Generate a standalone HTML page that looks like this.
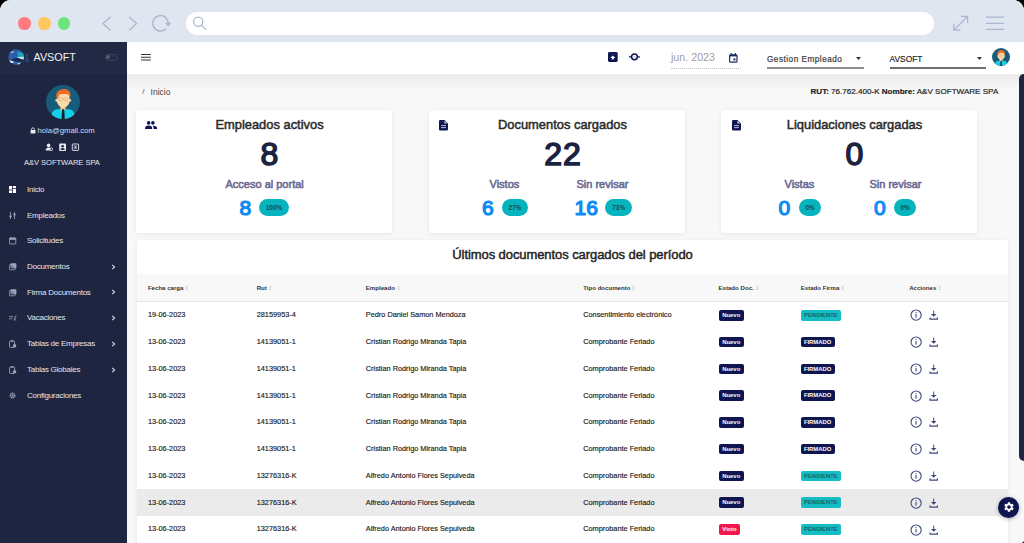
<!DOCTYPE html>
<html><head><meta charset="utf-8">
<style>
*{box-sizing:border-box;margin:0;padding:0}
html,body{width:1024px;height:543px;overflow:hidden;background:#000;font-family:"Liberation Sans",sans-serif}
#frame{position:absolute;left:0;top:0;width:1024px;height:543px;background:#f8f8f8;border-radius:11px 11px 3px 0;overflow:hidden}
.abs{position:absolute}
#chrome{position:absolute;left:0;top:0;width:1024px;height:42px;background:#e0e6f0}
.dot{position:absolute;width:12.6px;height:12.6px;border-radius:50%;top:17px}
#url{position:absolute;left:186px;top:11.5px;width:748px;height:23.5px;background:#fff;border-radius:12px}
#side{position:absolute;left:0;top:42px;width:127px;height:501px;background:#1e2541}
#sidehead{position:absolute;left:0;top:0;width:127px;height:32px;background:#222945}
#nav{position:absolute;left:127px;top:42px;width:897px;height:32px;background:#fff}
#navshadow{position:absolute;left:127px;top:74px;width:897px;height:16px;background:linear-gradient(#ebebeb,#f8f8f8)}
.menu{position:absolute;left:27px;color:#e2e4ec;font-size:8px;letter-spacing:-.25px;white-space:nowrap}
.mico{position:absolute;left:9px}
.chev{position:absolute;left:111px;width:4px;height:4px;border-right:1.2px solid #cfd3de;border-top:1.2px solid #cfd3de;transform:rotate(45deg)}
.card{position:absolute;top:110px;width:256px;height:123px;background:#fff;border-radius:3px;box-shadow:0 1px 5px rgba(0,0,0,.07)}
.ctitle{position:absolute;top:7.2px;left:0;width:100%;padding-left:11px;text-align:center;font-weight:normal;font-size:12.9px;line-height:16px;color:#2b2b2b;-webkit-text-stroke:.5px #2b2b2b;white-space:nowrap}
.cbig{position:absolute;top:25.9px;left:0;width:100%;padding-left:11px;text-align:center;font-size:32px;font-weight:normal;-webkit-text-stroke:1.5px #1b2340;color:#1b2340;line-height:36px}
.csub{position:absolute;top:68.3px;font-weight:normal;font-size:11px;line-height:12px;color:#6b6b94;-webkit-text-stroke:.6px #6b6b94;white-space:nowrap}
.cnum{position:absolute;top:86.2px;font-weight:normal;font-size:21px;-webkit-text-stroke:1.2px #0c8af6;color:#0c8af6;line-height:24px}
.badge{position:absolute;top:88.5px;height:17px;border-radius:9px;background:#07b4bd;color:#134c52;font-size:6.4px;font-weight:bold;text-align:center;line-height:17.5px}
#table{position:absolute;left:137px;top:239.5px;width:871px;height:320px;background:#fff;border-radius:3px;box-shadow:0 1px 5px rgba(0,0,0,.07)}
.th{position:absolute;top:44.8px;line-height:8px;font-size:6.1px;font-weight:bold;color:#333;white-space:nowrap}
.bdg{position:absolute;height:10.6px;border-radius:2px;font-size:5.9px;font-weight:bold;text-align:center;line-height:10.8px;white-space:nowrap}
.td{position:absolute;font-size:7.33px;color:#1a1a1a;-webkit-text-stroke:.15px #1a1a1a;line-height:10px;white-space:nowrap}
</style></head><body>
<div id="frame">
 <div id="chrome">
  <div class="dot" style="left:18.4px;background:#ff7b80"></div>
  <div class="dot" style="left:38.2px;background:#ffc75f"></div>
  <div class="dot" style="left:57.9px;background:#6ee57c"></div>
  <div id="url"></div>
  <svg class="abs" style="left:0;top:0" width="1024" height="42" viewBox="0 0 1024 42" fill="none" stroke="#a9b7d0" stroke-width="1.3" stroke-linecap="round" stroke-linejoin="round">
   <path d="M110.2 17.2 L103 23.6 L110.2 30"/>
   <path d="M129.4 17.2 L136.6 23.6 L129.4 30"/>
   <path d="M165.6 29 A7.7 7.7 0 1 1 168.1 22.6" stroke-width="1.5"/>
   <path d="M165.1 22.7 L171.3 22.7 L168.2 26.7Z" fill="#a9b7d0" stroke="none"/>
   <circle cx="198.2" cy="21.8" r="4.6"/>
   <path d="M201.6 25.4 L205.8 29.4"/>
   <path d="M953.8 30.2 L967.6 16.4 M961.6 16.4 L967.6 16.4 L967.6 22.4 M953.8 24.2 L953.8 30.2 L959.8 30.2"/>
   <path d="M986.4 17.2 H1003.6 M986.4 23.3 H1003.6 M986.4 29.4 H1003.6"/>
  </svg>
 </div>
 <div id="side"><div id="sidehead">
  <svg class="abs" style="left:8px;top:7px" width="22" height="17" viewBox="0 0 22 17">
   <defs><clipPath id="lgc"><circle cx="8.2" cy="8.1" r="7.8"/></clipPath></defs>
   <circle cx="8.2" cy="8.1" r="7.8" fill="#2b5ea6"/>
   <g clip-path="url(#lgc)">
    <path d="M9 3 Q13 2.5 16 5 L16 9 Q12 9.5 8.5 8.5 Q11 7 9 3Z" fill="#1aa6c4"/>
    <path d="M9.5 8.3 Q13 7.4 16.5 8 L16.5 11 Q12.5 11.8 9.5 8.3Z" fill="#bfe9ee"/>
    <path d="M3 11 Q7 8.5 11 9.2 Q14 10.5 16 10.5 L16 12 Q12 13.5 8 12.5 Q5 12 3 11Z" fill="#1b2a4e"/>
    <path d="M0 11.5 Q3 11 6.5 13 Q5 14.5 1 14Z" fill="#e6f3f5"/>
    <path d="M9 14.5 Q11.5 13.5 13 14 L11.5 16 Q10 16 9 14.5Z" fill="#a9dce6"/>
    <path d="M2.5 3 Q4.5 2 6.5 2.6 Q5.5 4 3 4Z" fill="#dbe9f2"/>
   </g>
   <path d="M17.5 4.5 Q20.2 4.2 20.2 6.2 Q20.2 8 18 9 L20.6 9 L20.6 13.2 L17.5 13.2Z" fill="#26467a"/>
  </svg>
  <div class="abs" style="left:33.5px;top:8px;color:#f1f2f6;font-size:10.8px;line-height:14px;letter-spacing:0">AVSOFT</div>
  <div class="abs" style="left:105px;top:12px;width:13px;height:6.5px;border-radius:4px;border:1px solid #3d4460;background:#262d48"></div>
  <div class="abs" style="left:106.2px;top:13.2px;width:4.2px;height:4.2px;border-radius:50%;background:#555b70"></div>
 </div>
 <svg class="abs" style="left:45.5px;top:43px" width="34" height="34" viewBox="0 0 34 34">
  <defs><clipPath id="avc"><circle cx="17" cy="17" r="17"/></clipPath></defs>
  <circle cx="17" cy="17" r="17" fill="#175c7a"/>
  <g clip-path="url(#avc)">
   <path d="M5.8 34 L5.8 29 Q6.2 24.8 11.5 24.2 L22.8 24.2 Q28 24.8 28.2 29 L28.2 34Z" fill="#17cfe6"/>
   <rect x="14.4" y="19" width="5.2" height="6" fill="#f4c089"/>
   <circle cx="10.9" cy="15.2" r="1.5" fill="#f8cf98"/><circle cx="23.6" cy="15.2" r="1.5" fill="#f8cf98"/>
   <path d="M11 10.5 Q11 8 13.5 8 L21 8 Q23.5 8 23.5 10.5 L23.5 16.5 Q23.5 19.2 20.8 21.4 L17.2 23 L13.8 21.4 Q11 19.2 11 16.5Z" fill="#fcd9a6"/>
   <path d="M16.2 24.2 L18.2 24.2 L18.8 34 L15.6 34Z" fill="#10232f"/>
   <path d="M10.6 13.5 Q9.6 9 11.6 6.5 Q14 3.9 18 4 Q22.6 4.3 24 7.4 Q25.1 10 24.1 12.6 Q23.4 9.6 21.2 9 L15 9 Q12.6 9.4 12.2 13.5Z" fill="#f26b22"/>
   <rect x="12.6" y="12.8" width="4.2" height="2.8" rx="1.2" fill="none" stroke="#cfae8a" stroke-width=".7"/>
   <rect x="17.8" y="12.8" width="4.2" height="2.8" rx="1.2" fill="none" stroke="#cfae8a" stroke-width=".7"/>
  </g>
 </svg>
 <svg class="abs" style="left:30.2px;top:84.6px" width="6" height="8" viewBox="0 0 6 8"><path d="M1.6 3.2 V2.2 A1.4 1.4 0 0 1 4.4 2.2 V3.2" fill="none" stroke="#e8eaf0" stroke-width=".8"/><rect x=".6" y="3" width="4.8" height="3.6" rx=".6" fill="#e8eaf0"/></svg>
 <div class="abs" style="left:37.6px;top:84.4px;color:#dcdee6;font-size:7.65px;line-height:10px">hola@gmail.com</div>
 <svg class="abs" style="left:45.3px;top:101.3px" width="36" height="9" viewBox="0 0 36 9" fill="#e8eaf0">
  <circle cx="3.6" cy="2.4" r="1.8"/><path d="M0.6 7.6 Q0.8 4.6 3.6 4.6 Q5 4.6 5.6 5.2 L5.2 7.6Z"/><circle cx="6.2" cy="6.2" r="1.4" fill="none" stroke="#e8eaf0" stroke-width=".8"/>
  <rect x="14.2" y=".4" width="6.8" height="7.6" rx=".7"/><circle cx="17.6" cy="3.2" r="1.3" fill="#1e2541"/><path d="M15.4 7 Q15.6 5 17.6 5 Q19.6 5 19.8 7Z" fill="#1e2541"/>
  <rect x="27.3" y="1" width="6.3" height="6.4" rx=".6" fill="none" stroke="#e8eaf0" stroke-width=".9"/><path d="M28.4 2.8 H32.5 M28.4 5.6 H32.5" stroke="#9da2b6" stroke-width=".6"/><path d="M29.6 2.6 L31.8 4.2 L29.6 5.8Z" fill="#e8eaf0"/>
 </svg>
 <div class="abs" style="left:24px;top:115.8px;color:#e8eaf0;font-size:7.5px;line-height:10px">A&amp;V SOFTWARE SPA</div>
<svg class="abs" style="left:9.2px;top:143.80px" width="8" height="8" viewBox="0 0 8 8"><rect x="0" y="0" width="3" height="3.6" fill="#fff"/><rect x="3.8" y="0" width="3.2" height="2.2" fill="#fff"/><rect x="0" y="4.4" width="3" height="2.6" fill="#fff"/><rect x="3.8" y="3" width="3.2" height="4" fill="#fff"/></svg>
<div class="menu" style="top:142.80px;line-height:10px">Inicio</div>
<svg class="abs" style="left:9.2px;top:169.53px" width="8" height="8" viewBox="0 0 8 8"><g stroke="#9ea3b8" stroke-width=".9" fill="none"><path d="M1.5 0 V7 M5.5 0 V7"/></g><rect x=".3" y="3.6" width="2.4" height="1.4" fill="#9ea3b8"/><rect x="4.3" y="1.8" width="2.4" height="1.4" fill="#9ea3b8"/></svg>
<div class="menu" style="top:168.53px;line-height:10px">Empleados</div>
<svg class="abs" style="left:9.2px;top:195.26px" width="8" height="8" viewBox="0 0 8 8"><rect x=".4" y="1" width="6.4" height="6" rx=".8" fill="none" stroke="#9ea3b8" stroke-width=".9"/><rect x=".4" y="1" width="6.4" height="1.8" fill="#9ea3b8"/><path d="M2 0 V1.6 M5.2 0 V1.6" stroke="#9ea3b8" stroke-width=".8"/></svg>
<div class="menu" style="top:194.26px;line-height:10px">Solicitudes</div>
<svg class="abs" style="left:9.2px;top:220.99px" width="8" height="8" viewBox="0 0 8 8"><rect x="1.6" y=".2" width="5.8" height="5" rx=".6" fill="#9ea3b8"/><rect x=".4" y="1.6" width="5.8" height="5.2" rx=".6" fill="none" stroke="#9ea3b8" stroke-width=".8"/><path d="M2 4.6 L3.4 3.4 L4.6 4.4" stroke="#1e2541" stroke-width=".7" fill="none"/></svg>
<div class="menu" style="top:219.99px;line-height:10px">Documentos</div>
<svg class="abs" style="left:111px;top:221.59px" width="5" height="6" viewBox="0 0 5 6"><path d="M1.2 .8 L3.6 3 L1.2 5.2" fill="none" stroke="#d6d9e2" stroke-width="1.1"/></svg>
<svg class="abs" style="left:9.2px;top:246.72px" width="8" height="8" viewBox="0 0 8 8"><rect x="1.6" y=".2" width="5.8" height="5" rx=".6" fill="#9ea3b8"/><rect x=".4" y="1.6" width="5.8" height="5.2" rx=".6" fill="none" stroke="#9ea3b8" stroke-width=".8"/><path d="M2 4.6 L3.4 3.4 L4.6 4.4" stroke="#1e2541" stroke-width=".7" fill="none"/></svg>
<div class="menu" style="top:245.72px;line-height:10px">Firma Documentos</div>
<svg class="abs" style="left:111px;top:247.32px" width="5" height="6" viewBox="0 0 5 6"><path d="M1.2 .8 L3.6 3 L1.2 5.2" fill="none" stroke="#d6d9e2" stroke-width="1.1"/></svg>
<svg class="abs" style="left:9.2px;top:272.45px" width="8" height="8" viewBox="0 0 8 8"><path d="M0 2.6 H4 M0 4.8 H3.2" stroke="#9ea3b8" stroke-width=".8"/><path d="M4.8 2.8 L5.8 3.8 L7.4 1.2 M4.8 4.2 L7 6.6 M7 4.2 L4.8 6.6" stroke="#9ea3b8" stroke-width=".8" fill="none"/></svg>
<div class="menu" style="top:271.45px;line-height:10px">Vacaciones</div>
<svg class="abs" style="left:111px;top:273.05px" width="5" height="6" viewBox="0 0 5 6"><path d="M1.2 .8 L3.6 3 L1.2 5.2" fill="none" stroke="#d6d9e2" stroke-width="1.1"/></svg>
<svg class="abs" style="left:9.2px;top:298.18px" width="8" height="8" viewBox="0 0 8 8"><rect x=".6" y="1" width="5" height="6.4" rx=".6" fill="none" stroke="#9ea3b8" stroke-width=".9"/><rect x="2" y=".2" width="2.2" height="1.4" fill="#9ea3b8"/><circle cx="5.6" cy="5.8" r="1.7" fill="#9ea3b8"/></svg>
<div class="menu" style="top:297.18px;line-height:10px">Tablas de Empresas</div>
<svg class="abs" style="left:111px;top:298.78px" width="5" height="6" viewBox="0 0 5 6"><path d="M1.2 .8 L3.6 3 L1.2 5.2" fill="none" stroke="#d6d9e2" stroke-width="1.1"/></svg>
<svg class="abs" style="left:9.2px;top:323.91px" width="8" height="8" viewBox="0 0 8 8"><rect x=".6" y="1" width="5" height="6.4" rx=".6" fill="none" stroke="#9ea3b8" stroke-width=".9"/><rect x="2" y=".2" width="2.2" height="1.4" fill="#9ea3b8"/><circle cx="5.6" cy="5.8" r="1.7" fill="#9ea3b8"/></svg>
<div class="menu" style="top:322.91px;line-height:10px">Tablas Globales</div>
<svg class="abs" style="left:111px;top:324.51px" width="5" height="6" viewBox="0 0 5 6"><path d="M1.2 .8 L3.6 3 L1.2 5.2" fill="none" stroke="#d6d9e2" stroke-width="1.1"/></svg>
<svg class="abs" style="left:9.2px;top:349.64px" width="8" height="8" viewBox="0 0 8 8"><circle cx="3.5" cy="3.5" r="2.2" fill="none" stroke="#9ea3b8" stroke-width="1.6" stroke-dasharray="1.2 .5"/><circle cx="3.5" cy="3.5" r="1" fill="#9ea3b8"/></svg>
<div class="menu" style="top:348.64px;line-height:10px">Configuraciones</div>
</div>
 <div id="nav">
  <svg class="abs" style="left:14px;top:12px" width="10" height="9" viewBox="0 0 10 9"><path d="M0 .5 H9.8 M0 3.3 H9.8 M0 6 H9.8" stroke="#333" stroke-width="1.05"/></svg>
  <svg class="abs" style="left:481px;top:10px" width="10" height="10" viewBox="0 0 10 10"><rect x="0" y="0" width="9.7" height="9.9" rx="1.4" fill="#0e1551"/><rect x="0" y="1.6" width="9.7" height=".5" fill="#3b4176"/><path d="M4.85 3.4 L7.4 6 L5.8 6 L5.8 7.4 L3.9 7.4 L3.9 6 L2.3 6Z" fill="#fff"/></svg>
  <svg class="abs" style="left:501.5px;top:11px" width="12" height="8" viewBox="0 0 12 8"><circle cx="5.45" cy="3.85" r="2.9" fill="none" stroke="#0e1551" stroke-width="1.5"/><path d="M0 3.85 H2.4 M8.5 3.85 H10.9" stroke="#0e1551" stroke-width="1.3"/><circle cx="5.45" cy="3.85" r="1" fill="#c8cbe0"/></svg>
  <div class="abs" style="left:544px;top:8.8px;font-size:10.7px;color:#9e9e9e;line-height:13px;white-space:nowrap">jun. 2023</div>
  <div class="abs" style="left:544px;top:25.6px;width:70px;height:0;border-top:1px dotted #c4c4c4"></div>
  <svg class="abs" style="left:601.6px;top:11px" width="9" height="10" viewBox="0 0 9 10"><rect x=".6" y="1.8" width="7.4" height="7.4" rx="1" fill="none" stroke="#1e2a62" stroke-width="1.2"/><rect x=".6" y="1.8" width="7.4" height="1.6" fill="#1e2a62"/><path d="M2.2 0 V2 M6.4 0 V2" stroke="#1e2a62" stroke-width="1.1"/><rect x="4.4" y="5.4" width="2" height="2" fill="#1e2a62"/></svg>
  <div class="abs" style="left:640px;top:12.8px;font-size:8.2px;color:#3a3a3a;-webkit-text-stroke:.2px #3a3a3a;letter-spacing:.5px;line-height:10px;white-space:nowrap">Gestion Empleado</div>
  <svg class="abs" style="left:728.6px;top:15.2px" width="6" height="4" viewBox="0 0 6 4"><path d="M0 0 H5 L2.5 3Z" fill="#333"/></svg>
  <div class="abs" style="left:640px;top:25.1px;width:96.5px;height:1.5px;background:#8f8f8f"></div>
  <div class="abs" style="left:762.5px;top:11.9px;font-size:8.4px;color:#222;-webkit-text-stroke:.15px #222;line-height:10px;white-space:nowrap">AVSOFT</div>
  <svg class="abs" style="left:850px;top:15.2px" width="6" height="4" viewBox="0 0 6 4"><path d="M0 0 H5 L2.5 3Z" fill="#333"/></svg>
  <div class="abs" style="left:762.5px;top:25.1px;width:96.5px;height:1.5px;background:#6f6f6f"></div>
  <svg class="abs" style="left:865px;top:6.3px" width="18" height="18" viewBox="0 0 34 34">
   <defs><clipPath id="avc2"><circle cx="17" cy="17" r="17"/></clipPath></defs>
   <circle cx="17" cy="17" r="17" fill="#175c7a"/>
   <g clip-path="url(#avc2)">
   <path d="M5.8 34 L5.8 29 Q6.2 24.8 11.5 24.2 L22.8 24.2 Q28 24.8 28.2 29 L28.2 34Z" fill="#17cfe6"/>
   <rect x="14.4" y="19" width="5.2" height="6" fill="#f4c089"/>
   <circle cx="10.9" cy="15.2" r="1.5" fill="#f8cf98"/><circle cx="23.6" cy="15.2" r="1.5" fill="#f8cf98"/>
   <path d="M11 10.5 Q11 8 13.5 8 L21 8 Q23.5 8 23.5 10.5 L23.5 16.5 Q23.5 19.2 20.8 21.4 L17.2 23 L13.8 21.4 Q11 19.2 11 16.5Z" fill="#fcd9a6"/>
   <path d="M16.2 24.2 L18.2 24.2 L18.8 34 L15.6 34Z" fill="#10232f"/>
   <path d="M10.6 13.5 Q9.6 9 11.6 6.5 Q14 3.9 18 4 Q22.6 4.3 24 7.4 Q25.1 10 24.1 12.6 Q23.4 9.6 21.2 9 L15 9 Q12.6 9.4 12.2 13.5Z" fill="#f26b22"/>
   <rect x="12.6" y="12.8" width="4.2" height="2.8" rx="1.2" fill="none" stroke="#cfae8a" stroke-width=".7"/>
   <rect x="17.8" y="12.8" width="4.2" height="2.8" rx="1.2" fill="none" stroke="#cfae8a" stroke-width=".7"/>
  </g>
  </svg>
 </div>
  <div id="navshadow"></div>
 <div class="abs" style="left:142.3px;top:87.4px;font-size:8px;color:#555;line-height:10px">/</div>
 <div class="abs" style="left:150.6px;top:87.2px;font-size:8.5px;color:#444;line-height:10px">Inicio</div>
 <div class="abs" style="left:810.5px;top:86.9px;font-size:8.07px;color:#222;-webkit-text-stroke:.2px #222;line-height:10px;white-space:nowrap"><b>RUT:</b> 76.762.400-K <b>Nombre:</b> A&amp;V SOFTWARE SPA</div>
 <div class="card" style="left:136px">
  <svg class="abs" style="left:8.5px;top:11px" width="13" height="9" viewBox="0 0 13 9" fill="#0e1551"><circle cx="3.6" cy="1.9" r="1.8"/><circle cx="7.9" cy="1.9" r="1.8"/><path d="M0 7.9 Q0 4.6 3.6 4.6 Q7.2 4.6 7.2 7.9Z"/><path d="M7.6 4.8 Q12.2 4.6 12.2 7.9 L8.6 7.9 Q8.6 5.6 7.6 4.8Z"/></svg>
  <div class="ctitle">Empleados activos</div>
  <div class="cbig">8</div>
  <div class="csub" style="left:89.5px">Acceso al portal</div>
  <div class="cnum" style="left:103.5px">8</div>
  <div class="badge" style="left:122.7px;width:30.6px">100%</div>
 </div>
 <div class="card" style="left:429px">
  <svg class="abs" style="left:10px;top:9.7px" width="10" height="11" viewBox="0 0 10 11" fill="#0e1551"><path d="M1.2 0 H5.6 L9 3.4 V9.2 A1.2 1.2 0 0 1 7.8 10.4 H1.2 A1.2 1.2 0 0 1 0 9.2 V1.2 A1.2 1.2 0 0 1 1.2 0Z"/><path d="M5.4 .6 V3.6 H8.4Z" fill="#c9cbe0"/><rect x="2" y="5.2" width="5" height=".9" fill="#c9cbe0"/><rect x="2" y="7.2" width="5" height=".9" fill="#c9cbe0"/></svg>
  <div class="ctitle">Documentos cargados</div>
  <div class="cbig" style="letter-spacing:1px;padding-left:12px">22</div>
  <div class="csub" style="left:60.5px">Vistos</div>
  <div class="csub" style="left:147.5px">Sin revisar</div>
  <div class="cnum" style="left:53px">6</div>
  <div class="badge" style="left:73px;width:26px">27%</div>
  <div class="cnum" style="left:145.5px">16</div>
  <div class="badge" style="left:176.4px;width:26.6px">73%</div>
 </div>
 <div class="card" style="left:721px">
  <svg class="abs" style="left:10.6px;top:9.7px" width="10" height="11" viewBox="0 0 10 11" fill="#0e1551"><path d="M1.2 0 H5.6 L9 3.4 V9.2 A1.2 1.2 0 0 1 7.8 10.4 H1.2 A1.2 1.2 0 0 1 0 9.2 V1.2 A1.2 1.2 0 0 1 1.2 0Z"/><path d="M5.4 .6 V3.6 H8.4Z" fill="#c9cbe0"/><rect x="2" y="5.2" width="5" height=".9" fill="#c9cbe0"/><rect x="2" y="7.2" width="5" height=".9" fill="#c9cbe0"/></svg>
  <div class="ctitle">Liquidaciones cargadas</div>
  <div class="cbig">0</div>
  <div class="csub" style="left:63.5px">Vistas</div>
  <div class="csub" style="left:148.5px">Sin revisar</div>
  <div class="cnum" style="left:57.5px">0</div>
  <div class="badge" style="left:78.2px;width:21.8px">0%</div>
  <div class="cnum" style="left:153px">0</div>
  <div class="badge" style="left:173px;width:22px">0%</div>
 </div>
 <div id="table">
<div class="abs" style="left:0;top:7.2px;width:871px;text-align:center;font-size:13px;font-weight:normal;color:#222;-webkit-text-stroke:.45px #222;letter-spacing:-.08px;line-height:16px;white-space:nowrap">Últimos documentos cargados del período</div>
<div class="abs" style="left:0;top:34.6px;width:871px;height:28px;background:#f8f8f8;border-bottom:1px solid #e6e6e6"></div>
<div class="th" style="left:10.9px">Fecha carga<svg style="margin-left:1.8px;vertical-align:-1px" width="3" height="6" viewBox="0 0 3 6"><path d="M.4 2.3 L1.5 1 L2.6 2.3Z M.4 3.7 L1.5 5 L2.6 3.7Z" fill="#aaa"/></svg></div>
<div class="th" style="left:119.7px">Rut<svg style="margin-left:1.8px;vertical-align:-1px" width="3" height="6" viewBox="0 0 3 6"><path d="M.4 2.3 L1.5 1 L2.6 2.3Z M.4 3.7 L1.5 5 L2.6 3.7Z" fill="#aaa"/></svg></div>
<div class="th" style="left:228.8px">Empleado<svg style="margin-left:1.8px;vertical-align:-1px" width="3" height="6" viewBox="0 0 3 6"><path d="M.4 2.3 L1.5 1 L2.6 2.3Z M.4 3.7 L1.5 5 L2.6 3.7Z" fill="#aaa"/></svg></div>
<div class="th" style="left:446.2px">Tipo documento<svg style="margin-left:1.8px;vertical-align:-1px" width="3" height="6" viewBox="0 0 3 6"><path d="M.4 2.3 L1.5 1 L2.6 2.3Z M.4 3.7 L1.5 5 L2.6 3.7Z" fill="#aaa"/></svg></div>
<div class="th" style="left:581.5px">Estado Doc.<svg style="margin-left:1.8px;vertical-align:-1px" width="3" height="6" viewBox="0 0 3 6"><path d="M.4 2.3 L1.5 1 L2.6 2.3Z M.4 3.7 L1.5 5 L2.6 3.7Z" fill="#aaa"/></svg></div>
<div class="th" style="left:663.7px">Estado Firma<svg style="margin-left:1.8px;vertical-align:-1px" width="3" height="6" viewBox="0 0 3 6"><path d="M.4 2.3 L1.5 1 L2.6 2.3Z M.4 3.7 L1.5 5 L2.6 3.7Z" fill="#aaa"/></svg></div>
<div class="th" style="left:772.2px">Acciones<svg style="margin-left:1.8px;vertical-align:-1px" width="3" height="6" viewBox="0 0 3 6"><path d="M.4 2.3 L1.5 1 L2.6 2.3Z M.4 3.7 L1.5 5 L2.6 3.7Z" fill="#aaa"/></svg></div>
<div class="td" style="left:10.9px;top:70.8px">19-06-2023</div>
<div class="td" style="left:119.7px;top:70.8px">28159953-4</div>
<div class="td" style="left:228.8px;top:70.8px">Pedro Daniel Samon Mendoza</div>
<div class="td" style="left:446.2px;top:70.8px">Consentimiento electrónico</div>
<div class="bdg" style="left:581.5px;top:70.6px;width:25.5px;background:#0e1551;color:#fff">Nuevo</div>
<div class="bdg" style="left:663.7px;top:70.6px;width:40.4px;background:#14bcc6;color:#17626a">PENDIENTE</div>
<svg class="abs" style="left:772.5px;top:69.9px" width="30" height="12" viewBox="0 0 30 12"><circle cx="6.1" cy="6.1" r="5.1" fill="none" stroke="#3e4a7e" stroke-width="1.1"/><rect x="5.5" y="3.1" width="1.1" height="1" fill="#3e4a7e"/><rect x="5.5" y="5" width="1.1" height="3.6" fill="#3e4a7e"/><path d="M23.7 1.6 V6.8" stroke="#3e4a7e" stroke-width="1"/><path d="M20.9 5 L23.7 7.8 L26.5 5Z" fill="#3e4a7e"/><path d="M20 8.4 V10.2 H27.4 V8.4" fill="none" stroke="#3e4a7e" stroke-width="1.2" stroke-linejoin="round"/></svg>
<div class="td" style="left:10.9px;top:97.6px">13-06-2023</div>
<div class="td" style="left:119.7px;top:97.6px">14139051-1</div>
<div class="td" style="left:228.8px;top:97.6px">Cristian Rodrigo Miranda Tapia</div>
<div class="td" style="left:446.2px;top:97.6px">Comprobante Feriado</div>
<div class="bdg" style="left:581.5px;top:97.4px;width:25.5px;background:#0e1551;color:#fff">Nuevo</div>
<div class="bdg" style="left:663.7px;top:97.4px;width:33.9px;background:#0e1551;color:#fff">FIRMADO</div>
<svg class="abs" style="left:772.5px;top:96.7px" width="30" height="12" viewBox="0 0 30 12"><circle cx="6.1" cy="6.1" r="5.1" fill="none" stroke="#3e4a7e" stroke-width="1.1"/><rect x="5.5" y="3.1" width="1.1" height="1" fill="#3e4a7e"/><rect x="5.5" y="5" width="1.1" height="3.6" fill="#3e4a7e"/><path d="M23.7 1.6 V6.8" stroke="#3e4a7e" stroke-width="1"/><path d="M20.9 5 L23.7 7.8 L26.5 5Z" fill="#3e4a7e"/><path d="M20 8.4 V10.2 H27.4 V8.4" fill="none" stroke="#3e4a7e" stroke-width="1.2" stroke-linejoin="round"/></svg>
<div class="td" style="left:10.9px;top:124.3px">13-06-2023</div>
<div class="td" style="left:119.7px;top:124.3px">14139051-1</div>
<div class="td" style="left:228.8px;top:124.3px">Cristian Rodrigo Miranda Tapia</div>
<div class="td" style="left:446.2px;top:124.3px">Comprobante Feriado</div>
<div class="bdg" style="left:581.5px;top:124.1px;width:25.5px;background:#0e1551;color:#fff">Nuevo</div>
<div class="bdg" style="left:663.7px;top:124.1px;width:33.9px;background:#0e1551;color:#fff">FIRMADO</div>
<svg class="abs" style="left:772.5px;top:123.4px" width="30" height="12" viewBox="0 0 30 12"><circle cx="6.1" cy="6.1" r="5.1" fill="none" stroke="#3e4a7e" stroke-width="1.1"/><rect x="5.5" y="3.1" width="1.1" height="1" fill="#3e4a7e"/><rect x="5.5" y="5" width="1.1" height="3.6" fill="#3e4a7e"/><path d="M23.7 1.6 V6.8" stroke="#3e4a7e" stroke-width="1"/><path d="M20.9 5 L23.7 7.8 L26.5 5Z" fill="#3e4a7e"/><path d="M20 8.4 V10.2 H27.4 V8.4" fill="none" stroke="#3e4a7e" stroke-width="1.2" stroke-linejoin="round"/></svg>
<div class="td" style="left:10.9px;top:151.1px">13-06-2023</div>
<div class="td" style="left:119.7px;top:151.1px">14139051-1</div>
<div class="td" style="left:228.8px;top:151.1px">Cristian Rodrigo Miranda Tapia</div>
<div class="td" style="left:446.2px;top:151.1px">Comprobante Feriado</div>
<div class="bdg" style="left:581.5px;top:150.9px;width:25.5px;background:#0e1551;color:#fff">Nuevo</div>
<div class="bdg" style="left:663.7px;top:150.9px;width:33.9px;background:#0e1551;color:#fff">FIRMADO</div>
<svg class="abs" style="left:772.5px;top:150.2px" width="30" height="12" viewBox="0 0 30 12"><circle cx="6.1" cy="6.1" r="5.1" fill="none" stroke="#3e4a7e" stroke-width="1.1"/><rect x="5.5" y="3.1" width="1.1" height="1" fill="#3e4a7e"/><rect x="5.5" y="5" width="1.1" height="3.6" fill="#3e4a7e"/><path d="M23.7 1.6 V6.8" stroke="#3e4a7e" stroke-width="1"/><path d="M20.9 5 L23.7 7.8 L26.5 5Z" fill="#3e4a7e"/><path d="M20 8.4 V10.2 H27.4 V8.4" fill="none" stroke="#3e4a7e" stroke-width="1.2" stroke-linejoin="round"/></svg>
<div class="td" style="left:10.9px;top:177.8px">13-06-2023</div>
<div class="td" style="left:119.7px;top:177.8px">14139051-1</div>
<div class="td" style="left:228.8px;top:177.8px">Cristian Rodrigo Miranda Tapia</div>
<div class="td" style="left:446.2px;top:177.8px">Comprobante Feriado</div>
<div class="bdg" style="left:581.5px;top:177.6px;width:25.5px;background:#0e1551;color:#fff">Nuevo</div>
<div class="bdg" style="left:663.7px;top:177.6px;width:33.9px;background:#0e1551;color:#fff">FIRMADO</div>
<svg class="abs" style="left:772.5px;top:176.9px" width="30" height="12" viewBox="0 0 30 12"><circle cx="6.1" cy="6.1" r="5.1" fill="none" stroke="#3e4a7e" stroke-width="1.1"/><rect x="5.5" y="3.1" width="1.1" height="1" fill="#3e4a7e"/><rect x="5.5" y="5" width="1.1" height="3.6" fill="#3e4a7e"/><path d="M23.7 1.6 V6.8" stroke="#3e4a7e" stroke-width="1"/><path d="M20.9 5 L23.7 7.8 L26.5 5Z" fill="#3e4a7e"/><path d="M20 8.4 V10.2 H27.4 V8.4" fill="none" stroke="#3e4a7e" stroke-width="1.2" stroke-linejoin="round"/></svg>
<div class="td" style="left:10.9px;top:204.6px">13-06-2023</div>
<div class="td" style="left:119.7px;top:204.6px">14139051-1</div>
<div class="td" style="left:228.8px;top:204.6px">Cristian Rodrigo Miranda Tapia</div>
<div class="td" style="left:446.2px;top:204.6px">Comprobante Feriado</div>
<div class="bdg" style="left:581.5px;top:204.4px;width:25.5px;background:#0e1551;color:#fff">Nuevo</div>
<div class="bdg" style="left:663.7px;top:204.4px;width:33.9px;background:#0e1551;color:#fff">FIRMADO</div>
<svg class="abs" style="left:772.5px;top:203.7px" width="30" height="12" viewBox="0 0 30 12"><circle cx="6.1" cy="6.1" r="5.1" fill="none" stroke="#3e4a7e" stroke-width="1.1"/><rect x="5.5" y="3.1" width="1.1" height="1" fill="#3e4a7e"/><rect x="5.5" y="5" width="1.1" height="3.6" fill="#3e4a7e"/><path d="M23.7 1.6 V6.8" stroke="#3e4a7e" stroke-width="1"/><path d="M20.9 5 L23.7 7.8 L26.5 5Z" fill="#3e4a7e"/><path d="M20 8.4 V10.2 H27.4 V8.4" fill="none" stroke="#3e4a7e" stroke-width="1.2" stroke-linejoin="round"/></svg>
<div class="td" style="left:10.9px;top:231.4px">13-06-2023</div>
<div class="td" style="left:119.7px;top:231.4px">13276316-K</div>
<div class="td" style="left:228.8px;top:231.4px">Alfredo Antonio Flores Sepulveda</div>
<div class="td" style="left:446.2px;top:231.4px">Comprobante Feriado</div>
<div class="bdg" style="left:581.5px;top:231.2px;width:25.5px;background:#0e1551;color:#fff">Nuevo</div>
<div class="bdg" style="left:663.7px;top:231.2px;width:40.4px;background:#14bcc6;color:#17626a">PENDIENTE</div>
<svg class="abs" style="left:772.5px;top:230.5px" width="30" height="12" viewBox="0 0 30 12"><circle cx="6.1" cy="6.1" r="5.1" fill="none" stroke="#3e4a7e" stroke-width="1.1"/><rect x="5.5" y="3.1" width="1.1" height="1" fill="#3e4a7e"/><rect x="5.5" y="5" width="1.1" height="3.6" fill="#3e4a7e"/><path d="M23.7 1.6 V6.8" stroke="#3e4a7e" stroke-width="1"/><path d="M20.9 5 L23.7 7.8 L26.5 5Z" fill="#3e4a7e"/><path d="M20 8.4 V10.2 H27.4 V8.4" fill="none" stroke="#3e4a7e" stroke-width="1.2" stroke-linejoin="round"/></svg>
<div class="abs" style="left:0;top:249.7px;width:871px;height:26.8px;background:#ebebeb"></div>
<div class="td" style="left:10.9px;top:258.1px">13-06-2023</div>
<div class="td" style="left:119.7px;top:258.1px">13276316-K</div>
<div class="td" style="left:228.8px;top:258.1px">Alfredo Antonio Flores Sepulveda</div>
<div class="td" style="left:446.2px;top:258.1px">Comprobante Feriado</div>
<div class="bdg" style="left:581.5px;top:257.9px;width:25.5px;background:#0e1551;color:#fff">Nuevo</div>
<div class="bdg" style="left:663.7px;top:257.9px;width:40.4px;background:#14bcc6;color:#17626a">PENDIENTE</div>
<svg class="abs" style="left:772.5px;top:257.2px" width="30" height="12" viewBox="0 0 30 12"><circle cx="6.1" cy="6.1" r="5.1" fill="none" stroke="#3e4a7e" stroke-width="1.1"/><rect x="5.5" y="3.1" width="1.1" height="1" fill="#3e4a7e"/><rect x="5.5" y="5" width="1.1" height="3.6" fill="#3e4a7e"/><path d="M23.7 1.6 V6.8" stroke="#3e4a7e" stroke-width="1"/><path d="M20.9 5 L23.7 7.8 L26.5 5Z" fill="#3e4a7e"/><path d="M20 8.4 V10.2 H27.4 V8.4" fill="none" stroke="#3e4a7e" stroke-width="1.2" stroke-linejoin="round"/></svg>
<div class="td" style="left:10.9px;top:284.9px">13-06-2023</div>
<div class="td" style="left:119.7px;top:284.9px">13276316-K</div>
<div class="td" style="left:228.8px;top:284.9px">Alfredo Antonio Flores Sepulveda</div>
<div class="td" style="left:446.2px;top:284.9px">Comprobante Feriado</div>
<div class="bdg" style="left:582.2px;top:284.7px;width:20.6px;background:#f2164f;color:#fff">Visto</div>
<div class="bdg" style="left:663.7px;top:284.7px;width:40.4px;background:#14bcc6;color:#17626a">PENDIENTE</div>
<svg class="abs" style="left:772.5px;top:284.0px" width="30" height="12" viewBox="0 0 30 12"><circle cx="6.1" cy="6.1" r="5.1" fill="none" stroke="#3e4a7e" stroke-width="1.1"/><rect x="5.5" y="3.1" width="1.1" height="1" fill="#3e4a7e"/><rect x="5.5" y="5" width="1.1" height="3.6" fill="#3e4a7e"/><path d="M23.7 1.6 V6.8" stroke="#3e4a7e" stroke-width="1"/><path d="M20.9 5 L23.7 7.8 L26.5 5Z" fill="#3e4a7e"/><path d="M20 8.4 V10.2 H27.4 V8.4" fill="none" stroke="#3e4a7e" stroke-width="1.2" stroke-linejoin="round"/></svg>
</div>
<div class="abs" style="left:1019px;top:74px;width:10px;height:387px;border-radius:5px;background:#1e2541"></div>
 <div class="abs" style="left:998px;top:496.5px;width:21px;height:21px;border-radius:50%;background:#0e1551;box-shadow:0 1px 4px rgba(0,0,0,.3)"></div>
 <svg class="abs" style="left:1002.5px;top:501px" width="12" height="12" viewBox="0 0 24 24"><path fill="#fff" d="M19.14 12.94c.04-.3.06-.61.06-.94 0-.32-.02-.64-.07-.94l2.03-1.58a.49.49 0 0 0 .12-.61l-1.92-3.32a.488.488 0 0 0-.59-.22l-2.39.96c-.5-.38-1.03-.7-1.62-.94l-.36-2.54a.484.484 0 0 0-.48-.41h-3.84c-.24 0-.43.17-.47.41l-.36 2.54c-.59.24-1.13.57-1.62.94l-2.39-.96c-.22-.08-.47 0-.59.22L2.74 8.87c-.12.21-.08.47.12.61l2.03 1.58c-.05.3-.09.63-.09.94s.02.64.07.94l-2.03 1.58a.49.49 0 0 0-.12.61l1.92 3.32c.12.22.37.29.59.22l2.39-.96c.5.38 1.03.7 1.62.94l.36 2.54c.05.24.24.41.48.41h3.84c.24 0 .44-.17.47-.41l.36-2.54c.59-.24 1.13-.56 1.62-.94l2.39.96c.22.08.47 0 .59-.22l1.92-3.32c.12-.22.07-.47-.12-.61l-2.01-1.58zM12 15.6c-1.98 0-3.6-1.62-3.6-3.6s1.62-3.6 3.6-3.6 3.6 1.62 3.6 3.6-1.62 3.6-3.6 3.6z"/></svg>
</div>
</body></html>
